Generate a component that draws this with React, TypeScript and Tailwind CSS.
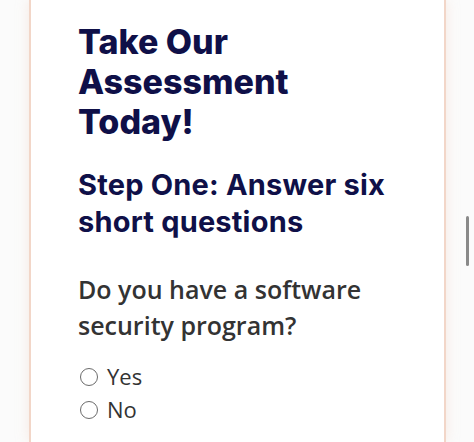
import React from "react";

const navy = "text-[#0f1048]";

function Radio({ label }: { label: string }) {
  return (
    <label className="flex items-center gap-[9px] h-[33px]">
      <span className="w-[18px] h-[18px] rounded-full border-[1.5px] border-[#6b6b6b] bg-white" />
      <span className="text-[22px] text-[#333333]" style={{ fontFamily: '"Open Sans", sans-serif' }}>
        {label}
      </span>
    </label>
  );
}

export default function App() {
  return (
    <div className="relative w-[474px] h-[442px] overflow-hidden bg-[#fbfbfb]">
      <div className="ml-[29px] w-[417px] h-full bg-white border-x-2 border-[#f2d6c8] shadow-[0_0_12px_rgba(240,200,180,0.35)] pl-[47px] pt-[22px]">
        <h1
          className={`${navy} text-[34px] leading-[40px] font-extrabold`}
          style={{ fontFamily: "Inter, sans-serif" }}
        >
          Take Our
          <br />
          Assessment
          <br />
          Today!
        </h1>
        <h2
          className={`${navy} mt-[24px] text-[29px] leading-[37px] font-bold tracking-[0.2px]`}
          style={{ fontFamily: "Inter, sans-serif" }}
        >
          Step One: Answer six
          <br />
          short questions
        </h2>
        <p
          className="mt-[31px] text-[25px] leading-[36px] font-semibold text-[#333333]"
          style={{ fontFamily: '"Open Sans", sans-serif' }}
        >
          Do you have a software
          <br />
          security program?
        </p>
        <div className="mt-[17px] pl-[2px] flex flex-col">
          <Radio label="Yes" />
          <Radio label="No" />
        </div>
      </div>
      <div className="absolute left-[466px] top-[216px] w-[3px] h-[50px] rounded-full bg-[#8a8a8a]" />
    </div>
  );
}
